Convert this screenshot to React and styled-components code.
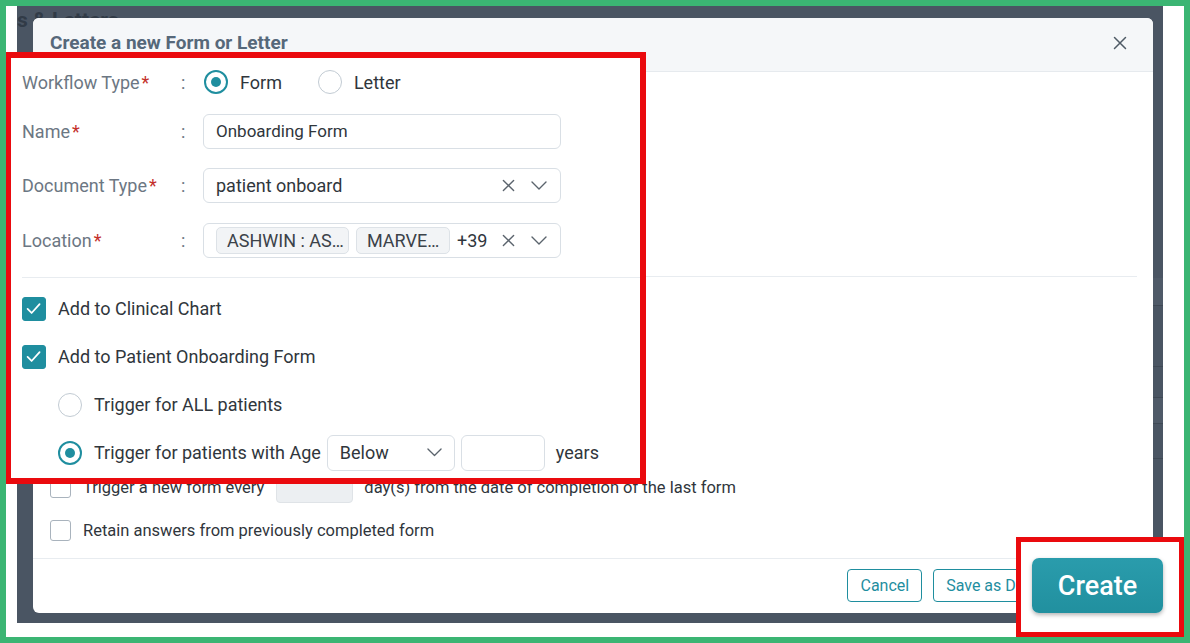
import React from 'react'
import styled, { createGlobalStyle } from 'styled-components'

const TEAL = '#1f8e9f'
const RED = '#ea0a0e'

const GlobalStyle = createGlobalStyle`
  html, body { margin: 0; padding: 0; background: #fff; }
  body { font-family: Roboto, "Noto Sans", "Liberation Sans", sans-serif; }
  *, *::before, *::after { box-sizing: border-box; }
`

function CrossIcon({ size = 13, color = '#5b646d', weight = 1.5 }) {
    return (
        <svg width={size} height={size} viewBox="0 0 14 14" fill="none">
            <path d="M1.5 1.5 L12.5 12.5 M12.5 1.5 L1.5 12.5" stroke={color} strokeWidth={weight} strokeLinecap="round" />
        </svg>
    )
}

function ChevronIcon({ width = 16, color = '#5b646d' }) {
    return (
        <svg width={width} height={width / 2 + 1} viewBox="0 0 16 9" fill="none">
            <path d="M1 1 L8 8 L15 1" stroke={color} strokeWidth="1.4" strokeLinecap="round" strokeLinejoin="round" />
        </svg>
    )
}

function Tick({ size }) {
    return (
        <svg width={size} height={size} viewBox="0 0 24 24" fill="none">
            <path d="M4.5 12.5 L9.5 17.5 L19.5 6.5" stroke="#fff" strokeWidth="2.2" strokeLinecap="round" strokeLinejoin="round" />
        </svg>
    )
}

function Checkbox({ on, size }) {
    return <Box $on={on} $size={size}>{on && <Tick size={size * 0.8} />}</Box>
}

function Radio({ on, size }) {
    return <Ring $on={on} $size={size} />
}

// the form block at the top, drawn once inside the magnified callout and once (smaller) in the modal
function TopFields() {
    return (
        <FieldGrid>
            <FieldLabel>Workflow Type<Req>*</Req></FieldLabel>
            <Colon>:</Colon>
            <RadioGroup>
                <Choice $font={18}><Radio on size={24} />Form</Choice>
                <Choice $font={18}><Radio size={24} />Letter</Choice>
            </RadioGroup>

            <FieldLabel>Name<Req>*</Req></FieldLabel>
            <Colon>:</Colon>
            <TextBox $font={17}>Onboarding Form</TextBox>

            <FieldLabel>Document Type<Req>*</Req></FieldLabel>
            <Colon>:</Colon>
            <TextBox>
                <Grow>patient onboard</Grow>
                <IconRow><CrossIcon /><ChevronIcon /></IconRow>
            </TextBox>

            <FieldLabel>Location<Req>*</Req></FieldLabel>
            <Colon>:</Colon>
            <TextBox>
                <Grow>
                    <Chip $w={133}>ASHWIN : AS…</Chip>
                    <Chip $w={94}>MARVE…</Chip>
                    <span>+39</span>
                </Grow>
                <IconRow><CrossIcon /><ChevronIcon /></IconRow>
            </TextBox>
        </FieldGrid>
    )
}

function App() {
    return (
        <>
            <GlobalStyle />
            <Frame>
                <Backdrop>
                    <PageBehind>
                        <PageTitle>Forms &amp; Letters</PageTitle>
                        <BehindTable>
                            <BehindRow $h={28} $shade />
                            <BehindRow $h={61} />
                            <BehindRow $h={31} />
                            <BehindRow $h={26} $shade />
                            <BehindRow $h={35} />
                        </BehindTable>
                    </PageBehind>

                    <Modal>
                        <ModalHeader>
                            <ModalTitle>Create a new Form or Letter</ModalTitle>
                            <CrossIcon size={14} color="#4f5b66" />
                        </ModalHeader>

                        <ModalBody>
                            <FormArea>
                                <Shrunk><TopFields /></Shrunk>
                            </FormArea>
                            <Rule $gap={0} />
                            <OptionList $top={17}>
                                <OptionRow $h={43}>
                                    <Choice $font={16.5}><Checkbox on size={21} />Add to Clinical Chart</Choice>
                                </OptionRow>
                                <OptionRow $h={43}>
                                    <Choice $font={16.5}><Checkbox on size={21} />Add to Patient Onboarding Form</Choice>
                                </OptionRow>
                                <OptionRow $h={43} $indent={32}>
                                    <Choice $font={16.5}><Radio size={21} />Trigger for ALL patients</Choice>
                                </OptionRow>
                                <OptionRow $h={43} $indent={32}>
                                    <Choice $font={16.5}><Radio on size={21} />Trigger for patients with Age</Choice>
                                    <SelectBox $w={112} $h={32} $font={15}>Below<ChevronIcon width={13} /></SelectBox>
                                    <NumberBox $w={74} $h={32} />
                                    <Plain $font={16.5}>years</Plain>
                                </OptionRow>
                                <OptionRow $h={43}>
                                    <Choice $font={16.5}><Checkbox size={21} />Trigger a new form every</Choice>
                                    <NumberBox $w={77} $h={30} $disabled />
                                    <Plain $font={16.5}>day(s) from the date of completion of the last form</Plain>
                                </OptionRow>
                                <OptionRow $h={43}>
                                    <Choice $font={16.5}><Checkbox size={21} />Retain answers from previously completed form</Choice>
                                </OptionRow>
                            </OptionList>
                        </ModalBody>

                        <ModalFooter>
                            <Button>Cancel</Button>
                            <Button>Save as Draft</Button>
                            <Button $primary>Create</Button>
                        </ModalFooter>
                    </Modal>
                </Backdrop>

                <Magnifier>
                    <TopFields />
                    <Rule />
                    <OptionList $top={7}>
                        <OptionRow $h={48}>
                            <Choice $font={18}><Checkbox on size={24} />Add to Clinical Chart</Choice>
                        </OptionRow>
                        <OptionRow $h={48}>
                            <Choice $font={18}><Checkbox on size={24} />Add to Patient Onboarding Form</Choice>
                        </OptionRow>
                        <OptionRow $h={48} $indent={36}>
                            <Choice $font={18}><Radio size={24} />Trigger for ALL patients</Choice>
                        </OptionRow>
                        <OptionRow $h={48} $indent={36}>
                            <Choice $font={18}><Radio on size={24} />Trigger for patients with Age</Choice>
                            <SelectBox $w={128} $h={36} $font={18}>Below<ChevronIcon width={15} /></SelectBox>
                            <NumberBox $w={84} $h={36} />
                            <Plain $font={18}>years</Plain>
                        </OptionRow>
                    </OptionList>
                </Magnifier>

                <CreateCallout>
                    <BigButton>Create</BigButton>
                </CreateCallout>
            </Frame>
        </>
    )
}

export default App

const Frame = styled.div`
    position: relative;
    width: 1190px;
    height: 643px;
    border: 6px solid #3bb573;
    background: #fff;
    padding: 0 21px 14px 11px;
    overflow: hidden;
`

const Backdrop = styled.div`
    position: relative;
    height: 100%;
    background: #4a5563;
    overflow: hidden;
`

const PageBehind = styled.div`
    padding-top: 2px;
`

const PageTitle = styled.h2`
    margin: 0 0 0 -49px;
    font-size: 21px;
    line-height: 24px;
    font-weight: 700;
    color: #313b47;
    white-space: nowrap;
`

const BehindTable = styled.div`
    margin-top: 246px;
`

const BehindRow = styled.div`
    height: ${p => p.$h}px;
    border-bottom: 1px solid #3f4955;
    background: ${p => (p.$shade ? '#4f5a68' : 'transparent')};
`

const Modal = styled.div`
    position: absolute;
    left: 16px;
    top: 12px;
    width: 1120px;
    height: 595px;
    background: #fff;
    border-radius: 6px;
    overflow: hidden;
    display: flex;
    flex-direction: column;
`

const ModalHeader = styled.div`
    height: 54px;
    flex-shrink: 0;
    background: #f5f7f9;
    border-bottom: 1px solid #e6eaee;
    display: flex;
    align-items: center;
    justify-content: space-between;
    padding: 0 26px 4px 17px;
`

const ModalTitle = styled.h3`
    margin: 0;
    font-size: 19px;
    font-weight: 700;
    color: #56687a;
`

const ModalBody = styled.div`
    height: 486px;
    flex-shrink: 0;
    padding: 0 16px 0 17px;
    display: flex;
    flex-direction: column;
`

const FormArea = styled.div`
    height: 204px;
    flex-shrink: 0;
    padding-top: 12px;
    overflow: hidden;
`

const Shrunk = styled.div`
    zoom: 0.86;
`

const ModalFooter = styled.div`
    flex: 1;
    border-top: 1px solid #e8ecf0;
    display: flex;
    justify-content: flex-end;
    align-items: center;
    gap: 11px;
    padding: 0 16px 2px;
`

const Button = styled.button`
    height: 33px;
    padding: 0 12px;
    border-radius: 4px;
    border: 1px solid ${TEAL};
    background: ${p => (p.$primary ? TEAL : '#fff')};
    color: ${p => (p.$primary ? '#fff' : TEAL)};
    font-family: Roboto, sans-serif;
    font-size: 16px;
`

const Magnifier = styled.div`
    position: absolute;
    left: -1px;
    top: 46px;
    width: 641px;
    height: 432px;
    border: 6px solid ${RED};
    background: #fff;
    padding: 12px 0 0 11px;
    z-index: 2;
`

const CreateCallout = styled.div`
    position: absolute;
    left: 1010px;
    top: 531px;
    width: 168px;
    height: 100px;
    border: 5px solid ${RED};
    background: #fff;
    padding: 16px 0 0 11px;
    z-index: 2;
`

const BigButton = styled.button`
    width: 131px;
    height: 55px;
    border: none;
    border-radius: 7px;
    background: linear-gradient(#2a9cac, #21909f);
    box-shadow: 0 2px 4px rgba(0, 0, 0, 0.3);
    color: #fff;
    font-family: Roboto, sans-serif;
    font-size: 27px;
    font-weight: 500;
    padding: 0;
`

const FieldGrid = styled.div`
    display: grid;
    grid-template-columns: 159px 22px 358px;
    grid-template-rows: 24px repeat(3, 35px);
    row-gap: 19.5px;
    align-items: center;
`

const FieldLabel = styled.span`
    font-size: 18px;
    color: #6c7783;
    white-space: nowrap;
`

const Req = styled.span`
    color: #c4302b;
    margin-left: 2px;
`

const Colon = styled.span`
    font-size: 18px;
    color: #6c7783;
`

const RadioGroup = styled.div`
    display: flex;
    align-items: center;
    gap: 30px;
    padding-left: 1px;
`

const TextBox = styled.div`
    height: 100%;
    border: 1px solid #d9dfe5;
    border-radius: 6px;
    display: flex;
    align-items: center;
    padding: 0 13px 0 12px;
    font-size: ${p => p.$font || 18}px;
    color: #30363c;
    white-space: nowrap;
`

const Grow = styled.div`
    flex: 1;
    display: flex;
    align-items: center;
    gap: 7px;
`

const IconRow = styled.div`
    display: flex;
    align-items: center;
    gap: 16px;
`

const Chip = styled.span`
    width: ${p => p.$w}px;
    height: 27px;
    padding: 0 0 0 10px;
    display: inline-flex;
    align-items: center;
    border: 1px solid #dde2e7;
    border-radius: 5px;
    background: #f2f4f6;
    color: #3b4249;
    font-size: 18px;
    overflow: hidden;
`

const Rule = styled.div`
    height: 1px;
    flex-shrink: 0;
    background: #e8ecf0;
    margin-top: ${p => p.$gap ?? 19}px;
`

const OptionList = styled.div`
    display: flex;
    flex-direction: column;
    padding-top: ${p => p.$top}px;
`

const OptionRow = styled.div`
    height: ${p => p.$h}px;
    flex-shrink: 0;
    display: flex;
    align-items: center;
    gap: 6px;
    padding-left: ${p => p.$indent || 0}px;
`

const Choice = styled.label`
    display: flex;
    align-items: center;
    gap: 12px;
    font-size: ${p => p.$font}px;
    color: #30363c;
    white-space: nowrap;
    margin-right: 6px;
`

const Plain = styled.span`
    font-size: ${p => p.$font}px;
    color: #30363c;
    white-space: nowrap;
    margin-left: 5px;
`

const SelectBox = styled.div`
    width: ${p => p.$w}px;
    height: ${p => p.$h}px;
    border: 1px solid #d9dfe5;
    border-radius: 6px;
    display: flex;
    align-items: center;
    justify-content: space-between;
    padding: 0 12px;
    font-size: ${p => p.$font}px;
    color: #30363c;
    margin-left: -6px;
`

const NumberBox = styled.div`
    width: ${p => p.$w}px;
    height: ${p => p.$h}px;
    border: 1px solid ${p => (p.$disabled ? '#dfe3e7' : '#d9dfe5')};
    border-radius: ${p => (p.$disabled ? 4 : 6)}px;
    background: ${p => (p.$disabled ? '#eceff2' : '#fff')};
`

const Box = styled.span`
    width: ${p => p.$size}px;
    height: ${p => p.$size}px;
    flex-shrink: 0;
    border-radius: 3px;
    border: 1px solid ${p => (p.$on ? TEAL : '#a9b3bd')};
    background: ${p => (p.$on ? TEAL : '#fff')};
    display: inline-flex;
    align-items: center;
    justify-content: center;
`

const Ring = styled.span`
    width: ${p => p.$size}px;
    height: ${p => p.$size}px;
    flex-shrink: 0;
    border-radius: 50%;
    border: ${p => (p.$on ? `2.5px solid ${TEAL}` : '1.5px solid #c2cbd3')};
    display: inline-flex;
    align-items: center;
    justify-content: center;

    &::after {
        content: '';
        width: 50%;
        height: 50%;
        border-radius: 50%;
        background: ${TEAL};
        display: ${p => (p.$on ? 'block' : 'none')};
    }
`
